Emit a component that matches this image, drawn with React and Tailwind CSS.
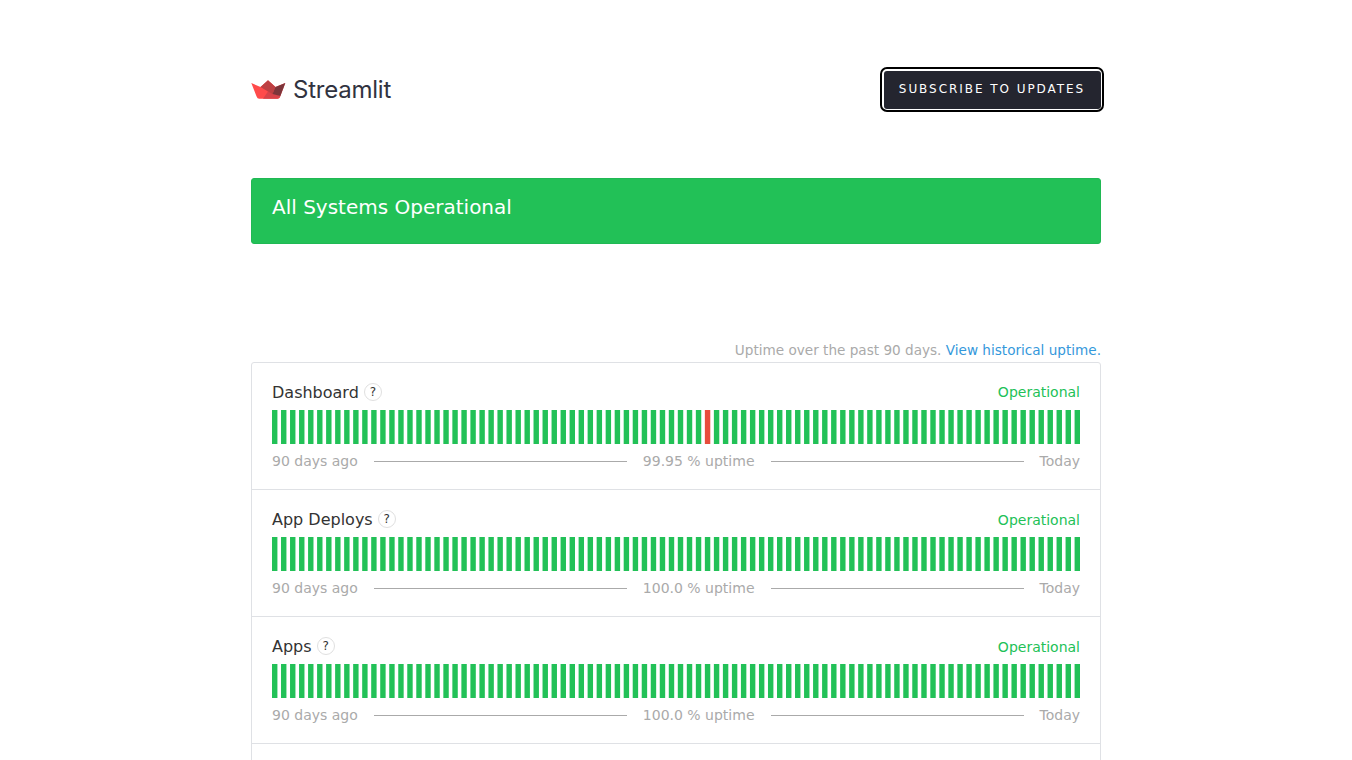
const FONT = "font-['DejaVu_Sans',sans-serif]";

function Logo() {
  return (
    <div className="flex items-center gap-[7px]">
      <svg width="35" height="20" viewBox="0 0 35 20" aria-hidden="true">
        <path d="M0.3 3 L9.5 7 L17 0.2 L24.5 7 L34.3 3 L29.2 16.6 Q28.6 18.8 26.5 18.8 H8.2 Q6.3 18.8 5.6 16.6 Z" fill="#ff4b4b" />
        <path d="M17 11.5 L29.4 16 Q28.6 18.8 26.5 18.8 H12 Z" fill="#d8434a" />
        <path d="M9.5 7 L17 0.2 L24.5 7 L21.5 14 L17 11.5 Z" fill="#bd4043" />
        <path d="M34.3 3 L29.4 16 L21.5 14 L24.5 7 Z" fill="#7d353b" />
      </svg>
      <span className="font-['Inter',sans-serif] text-[24px] leading-[30px] tracking-[-0.23px] text-[#31333f]">Streamlit</span>
    </div>
  );
}

function Bars({ red }) {
  return (
    <svg className="block w-full h-[34px]" viewBox="0 0 448 34" preserveAspectRatio="none" aria-hidden="true">
      {Array.from({ length: 90 }, (_, i) => (
        <rect key={i} x={i * 5} y="0" width="3" height="34" fill={i === red ? "#e74c3c" : "#22c157"} />
      ))}
    </svg>
  );
}

function Row({ name, uptime, red, first }) {
  return (
    <div className={`px-5 pt-[19px] ${first ? "h-[126px]" : "h-[127px] border-t border-[#dfe1e5]"}`}>
      <div className="flex items-center justify-between h-[20px]">
        <div className="flex items-center gap-[5px]">
          <span className="mt-[2px] text-[16px] leading-[20px] text-[#333333]">{name}</span>
          <span className="flex items-center justify-center w-[18px] h-[18px] rounded-full border border-[#e0e0e0] text-[12px] leading-none text-[#333333]">?</span>
        </div>
        <span className={`text-[14px] leading-[20px] text-[#22c157] ${first ? "" : "mt-[2px]"}`}>Operational</span>
      </div>
      <div className="mt-[8px]"><Bars red={red} /></div>
      <div className="mt-[7px] flex items-center text-[14px] leading-[20px] text-[#aaaaaa]">
        <span>90 days ago</span>
        <span className="flex-1 h-px bg-[#aaaaaa] mx-4" />
        <span>{uptime} % uptime</span>
        <span className="flex-1 h-px bg-[#aaaaaa] mx-4" />
        <span>Today</span>
      </div>
    </div>
  );
}

export default function App() {
  return (
    <div className={`h-screen overflow-hidden bg-white antialiased ${FONT}`}>
      <div className="w-[850px] mx-auto pt-[67px]">
        <header className="flex items-center justify-between h-[45px]">
          <Logo />
          <button className="w-[224px] h-[45px] mr-[-3px] rounded-[7px] border-2 border-black p-[1.5px] bg-white">
            <span className="flex items-center justify-center h-full pb-[2px] rounded-[3px] bg-[#24252f] text-white text-[12px] tracking-[1.95px]">SUBSCRIBE TO UPDATES</span>
          </button>
        </header>

        <div className="mt-[66px] h-[66px] rounded-[3px] bg-[#22c157] border border-[#20b854] px-5 pt-[14px] text-[20px] leading-[28px] text-white">
          All Systems Operational
        </div>

        <div className="mt-[96px] h-[22px] text-right text-[13.6px] leading-[20px] text-[#aaaaaa]">
          Uptime over the past 90 days. <span className="text-[#3498db]">View historical uptime.</span>
        </div>

        <div className="border border-[#dfe1e5] rounded-t-[3px] h-[500px]">
          <Row first name="Dashboard" uptime="99.95" red={48} />
          <Row name="App Deploys" uptime="100.0" />
          <Row name="Apps" uptime="100.0" />
          <div className="border-t border-[#dfe1e5]" />
        </div>
      </div>
    </div>
  );
}
